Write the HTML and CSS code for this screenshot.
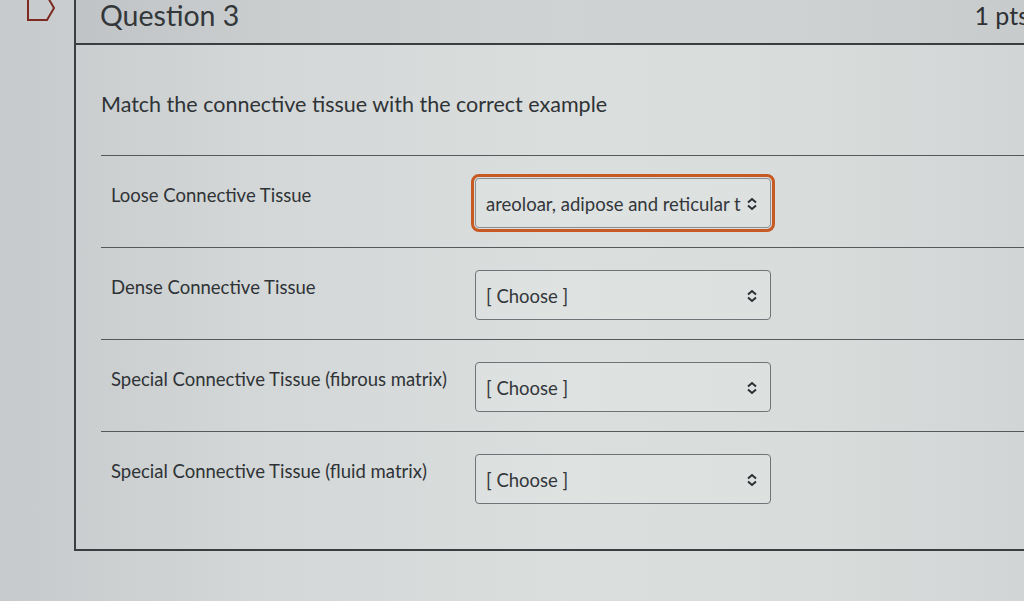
FILE: index.html
```html
<!DOCTYPE html>
<html lang="en">
  <head>
    <meta charset="UTF-8" />
    <meta name="viewport" content="width=device-width, initial-scale=1.0" />
    <title>Question 3</title>
    <link rel="stylesheet" href="styles.css">
  </head>
  <body>
    <div class="rail">
      <svg class="flag" width="40" height="26" viewBox="0 0 40 26">
        <path d="M4 -4 V20 H23 L30 8 L23 -4" fill="none" stroke="#7c2a22" stroke-width="2" stroke-linejoin="miter" />
      </svg>
    </div>

    <div class="quiz">
      <div class="quiz-header">
        <h2>Question 3</h2>
        <span class="points">1 pts</span>
      </div>

      <div class="quiz-body">
        <p class="prompt">Match the connective tissue with the correct example</p>

        <div class="match-row">
          <label>Loose Connective Tissue</label>
          <div class="select focused">
            <span>areoloar, adipose and reticular t</span>
            <svg class="updown" width="12" height="14" viewBox="0 0 12 14">
              <path d="M2 5.5 L6 2 L10 5.5 M2 8.5 L6 12 L10 8.5" fill="none" stroke="#2b2f33" stroke-width="2" />
            </svg>
          </div>
        </div>

        <div class="match-row">
          <label>Dense Connective Tissue</label>
          <div class="select">
            <span>[ Choose ]</span>
            <svg class="updown" width="12" height="14" viewBox="0 0 12 14">
              <path d="M2 5.5 L6 2 L10 5.5 M2 8.5 L6 12 L10 8.5" fill="none" stroke="#2b2f33" stroke-width="2" />
            </svg>
          </div>
        </div>

        <div class="match-row">
          <label>Special Connective Tissue (fibrous matrix)</label>
          <div class="select">
            <span>[ Choose ]</span>
            <svg class="updown" width="12" height="14" viewBox="0 0 12 14">
              <path d="M2 5.5 L6 2 L10 5.5 M2 8.5 L6 12 L10 8.5" fill="none" stroke="#2b2f33" stroke-width="2" />
            </svg>
          </div>
        </div>

        <div class="match-row">
          <label>Special Connective Tissue (fluid matrix)</label>
          <div class="select">
            <span>[ Choose ]</span>
            <svg class="updown" width="12" height="14" viewBox="0 0 12 14">
              <path d="M2 5.5 L6 2 L10 5.5 M2 8.5 L6 12 L10 8.5" fill="none" stroke="#2b2f33" stroke-width="2" />
            </svg>
          </div>
        </div>
      </div>
    </div>
  </body>
</html>
```

FILE: styles.css
```css
body {
  margin: 0;
  height: 601px;
  overflow: hidden;
  display: flex;
  align-items: flex-start;
  font-family: Lato, "Open Sans", sans-serif;
  color: #2f3336;
  background: linear-gradient(to right, #c6cacc 0%, #d3d7d7 25%, #dadedd 55%, #d8dcdb 80%, #d1d5d5 100%);
}
.rail {
  width: 72px;
  flex-shrink: 0;
}
.flag {
  display: block;
  margin-left: 24px;
}
.quiz {
  flex: 1;
  height: 549px;
  border-left: 2px solid #3b3e41;
  border-bottom: 2px solid #3b3e41;
  margin-left: 2px;
}
.quiz-header {
  height: 43px;
  display: flex;
  justify-content: space-between;
  align-items: flex-start;
  padding-left: 24px;
  border-bottom: 2px solid #3b3e41;
  background-color: rgba(90, 95, 100, 0.08);
}
.quiz-header h2 {
  margin: 0;
  font-size: 28.5px;
  font-weight: 400;
  line-height: 30px;
  color: #33373a;
}
.points {
  font-size: 25px;
  line-height: 30px;
  margin-right: -5px;
  color: #2e3134;
}
.quiz-body {
  padding-left: 25px;
}
.prompt {
  margin: 46px 0 38px;
  font-size: 21.5px;
  line-height: 26px;
}
.match-row {
  display: flex;
  align-items: flex-start;
  padding: 22px 0 19px 10px;
  border-top: 1px solid #55595c;
}
.match-row label {
  width: 364px;
  padding-top: 6px;
  font-size: 18.5px;
  line-height: 22px;
}
.select {
  box-sizing: border-box;
  width: 296px;
  height: 50px;
  display: flex;
  align-items: center;
  justify-content: space-between;
  padding: 2px 12px 0 10px;
  border: 1px solid #707478;
  border-radius: 4px;
  background-color: rgba(255, 255, 255, 0.12);
  font-size: 18.5px;
  color: #33373b;
}
.select.focused {
  border-color: #8a8e92;
  outline: 3px solid #c65a22;
  outline-offset: 1px;
}
.updown {
  display: block;
}
```
